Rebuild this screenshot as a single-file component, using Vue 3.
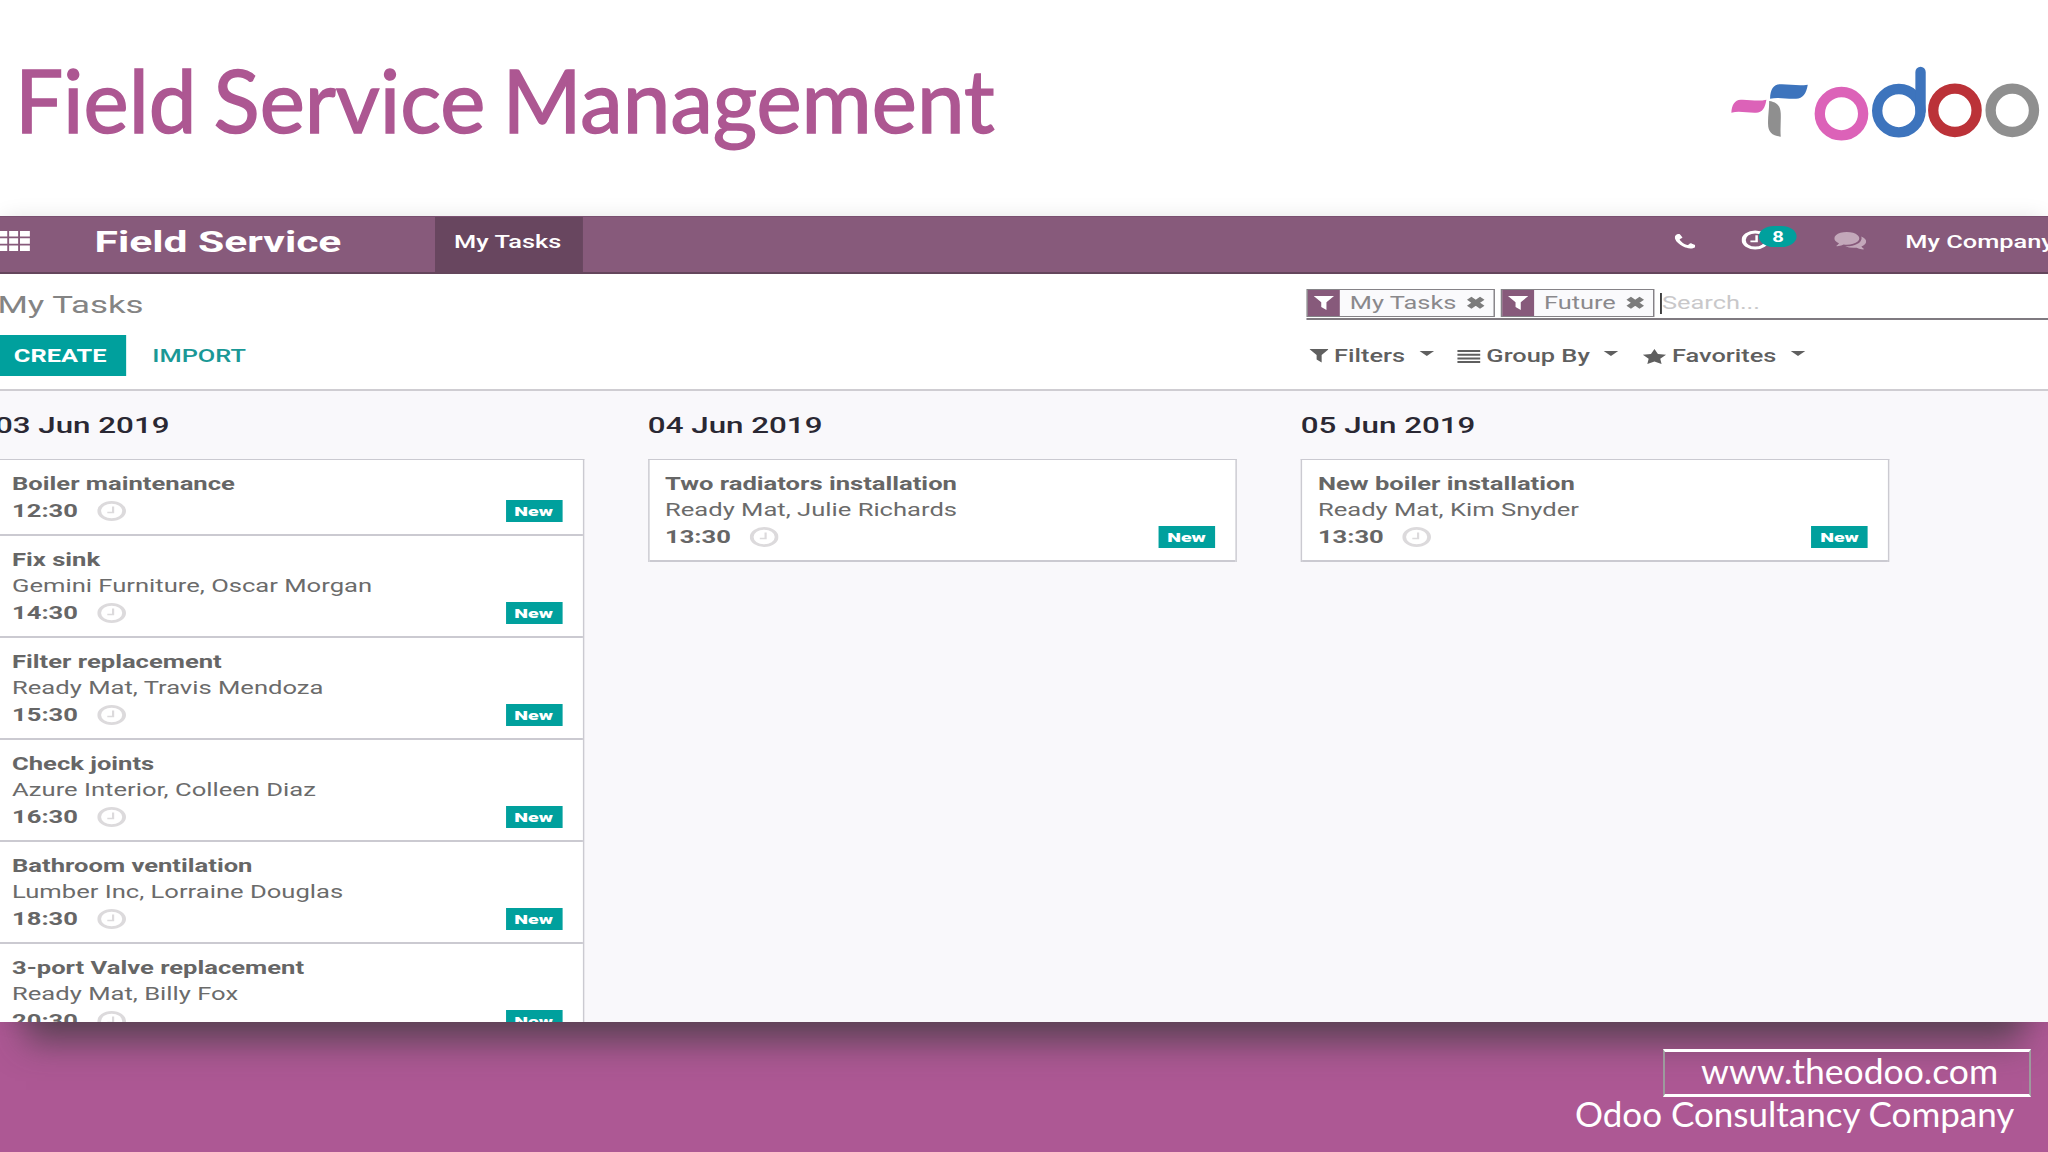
<script setup>
const menus = [
  { label: 'Filters', icon: 'filter' },
  { label: 'Group By', icon: 'bars' },
  { label: 'Favorites', icon: 'star' },
]
const facets = ['My Tasks', 'Future']
const columns = [
  {
    title: '03 Jun 2019',
    tasks: [
      { name: 'Boiler maintenance', time: '12:30' },
      { name: 'Fix sink', partner: 'Gemini Furniture, Oscar Morgan', time: '14:30' },
      { name: 'Filter replacement', partner: 'Ready Mat, Travis Mendoza', time: '15:30' },
      { name: 'Check joints', partner: 'Azure Interior, Colleen Diaz', time: '16:30' },
      { name: 'Bathroom ventilation', partner: 'Lumber Inc, Lorraine Douglas', time: '18:30' },
      { name: '3-port Valve replacement', partner: 'Ready Mat, Billy Fox', time: '20:30' },
    ],
  },
  { title: '04 Jun 2019', tasks: [{ name: 'Two radiators installation', partner: 'Ready Mat, Julie Richards', time: '13:30' }] },
  { title: '05 Jun 2019', tasks: [{ name: 'New boiler installation', partner: 'Ready Mat, Kim Snyder', time: '13:30' }] },
]
</script>

<template>
  <div class="slide">
    <header class="head">
      <h1 class="title">Field Service Management</h1>
      <svg class="logo" viewBox="0 0 1043 360" preserveAspectRatio="none">
        <path fill="#dc62b8" d="M94 218C95 194 104 180 122 179C150 178 172 185 199 179C195 204 187 217 168 218C142 219 118 212 94 218Z" />
        <path fill="#3d74bd" d="M210 176C211 148 220 134 240 133C268 132 294 139 323 134C319 160 308 175 288 176C262 178 236 170 210 176Z" />
        <path fill="#8f8f8f" d="M207 183C230 186 241 197 242 220C243 244 240 266 242 290C216 287 204 276 204 252C203 228 208 206 207 183Z" />
        <g fill="none" stroke-width="31">
          <circle cx="424" cy="221" r="65" stroke="#dc62b8" />
          <circle cx="596" cy="212" r="65" stroke="#3d74bd" />
          <path d="M661 212V96" stroke="#3d74bd" stroke-linecap="round" />
          <circle cx="764" cy="211" r="65" stroke="#bb3238" />
          <circle cx="936" cy="211" r="65" stroke="#8f8f8f" />
        </g>
      </svg>
    </header>

    <div class="shot">
      <div class="app">
        <nav class="nav">
          <svg class="apps" viewBox="0 0 21 20"><path fill="#fff" d="M0 0h5v5.600H0zM6.300 0h6.200v5.600H6.300zM13.800 0h6.800v5.600h-6.800zM0 7.200h5v5.600H0zM6.300 7.200h6.200v5.600H6.300zM13.800 7.200h6.800v5.600h-6.800zM0 14.400h5V20H0zM6.300 14.400h6.200V20H6.300zM13.800 14.400h6.800V20h-6.800z" /></svg>
          <span class="brand">Field Service</span>
          <span class="tab">My Tasks</span>
          <div class="tray">
            <svg class="phone" viewBox="0 0 1408 1408"><path fill="#fff" d="M1408 1112q0 27-10 70.500t-21 68.500q-21 50-122 106-94 51-186 51-27 0-52.500-3.500T959 1392t-47.500-14.500-55.500-20.500-49-18q-98-35-175-83-128-79-264.500-215.500T152 776q-48-77-83-175-3-9-18-49t-20.500-55.500T16 449 3.500 391.500 0 339q0-92 51-186Q107 52 157 31q25-11 68.500-21T296 0q14 0 21 3 18 6 53 76 11 19 30 54t35 63.500 31 53.500q3 4 17.500 25t21.500 35.500 7 28.500q0 20-28.500 50t-62 55-62 53-28.500 46q0 9 5 22.500t8.500 20.500 14 24 11.500 19q76 137 174 235t235 174q2 1 19 11.500t24 14 20.500 8.500 22.500 5q18 0 46-28.500t53-62 55-62 50-28.500q14 0 28.500 7t35.500 21.500 25 17.500q25 15 53.500 31t63.500 35 54 30q70 35 76 53 3 7 3 21z" /></svg>
            <div class="activity">
              <svg viewBox="0 0 20 20"><g fill="none" stroke="#fff"><circle cx="10" cy="10" r="8.400" stroke-width="3" /><path d="M11 5v6.500H6.500" stroke-width="1.800" /></g></svg>
              <span class="count">8</span>
            </div>
            <svg class="chat" viewBox="0 0 1792 1536" preserveAspectRatio="none"><path fill="#c3a8ba" d="M1408 512q0 139-94 257t-256.500 186.500T704 1024q-86 0-176-16-124 88-278 128-36 9-86 16h-3q-11 0-20.500-8t-11.500-21q-1-3-1-6.500t.5-6.500 2-6l2.500-5 3.500-5.500 4-5 4.500-5 4-4.500q5-6 23-25t26-29.500 22.500-29 25-38.500 20.500-44q-124-72-195-177T0 512q0-139 94-257T350.500 68.500 704 0t353.500 68.500T1314 255t94 257zM1792 768q0 120-71 224.500T1526 1169q10 24 20.500 44t25 38.500 22.500 29 26 29.500 23 25q1 1 4 4.500t4.500 5 4 5 3.500 5.500l2.500 5 2 6 .5 6.500-1 6.500q-3 14-13 22t-22 7q-50-7-86-16-154-40-278-128-90 16-176 16-271 0-472-132 58 4 88 4 161 0 309-45t264-129q125-92 192-212t67-254q0-77-23-152 129 71 204 178t75 230z" /></svg>
            <span class="company">My Company</span>
          </div>
        </nav>

        <section class="panel">
          <div class="left">
            <div class="crumb">My Tasks</div>
            <div class="buttons"><button class="create">CREATE</button><button class="import">IMPORT</button></div>
          </div>
          <div class="right">
            <div class="search">
              <div v-for="f in facets" :key="f" class="facet">
                <span class="ficon"><svg viewBox="0 0 14 14"><path fill="#fff" d="M0 0h14L8.800 6.200V14L5.200 11V6.200z" /></svg></span>
                <span class="flabel">{{ f }}</span>
                <svg class="x" viewBox="0 0 12 12"><path d="M2 2l8 8M10 2l-8 8" stroke="#7c7c7c" stroke-width="3.900" /></svg>
              </div>
              <span class="cursor"></span><span class="ph">Search...</span>
            </div>
            <div class="menus">
              <div v-for="m in menus" :key="m.label" class="menu" :class="m.icon">
                <svg v-if="m.icon === 'filter'" class="mi" viewBox="0 0 14 14"><path fill="#5f5f5f" d="M0 0h14L8.800 6.200V14L5.200 11V6.200z" /></svg>
                <svg v-else-if="m.icon === 'bars'" class="mi" viewBox="0 0 16 14"><path fill="#5f5f5f" d="M0 .5h16v2H0zM0 4.200h16v2H0zM0 7.900h16v2H0zM0 11.600h16v2H0z" /></svg>
                <svg v-else class="mi" viewBox="0 0 16 15"><path fill="#5f5f5f" d="M8 0l2.400 5 5.600.8-4 3.900.9 5.300L8 12.400 3.100 15l.9-5.300-4-3.900L5.600 5z" /></svg>
                <span class="ml">{{ m.label }}</span>
                <i class="caret"></i>
              </div>
            </div>
          </div>
        </section>

        <main class="board">
          <section v-for="c in columns" :key="c.title" class="col">
            <h2>{{ c.title }}</h2>
            <div class="cards">
              <article v-for="t in c.tasks" :key="t.name" class="card">
                <div class="name">{{ t.name }}</div>
                <div v-if="t.partner" class="partner">{{ t.partner }}</div>
                <div class="foot">
                  <span class="time">{{ t.time }}</span>
                  <svg class="clock" viewBox="0 0 20 20"><g fill="none" stroke="#dcdadc"><circle cx="10" cy="10" r="8.600" stroke-width="2.600" /><path d="M11 5.500v6H7" stroke-width="1.500" /></g></svg>
                  <span class="badge">New</span>
                </div>
              </article>
            </div>
          </section>
        </main>
      </div>
    </div>

    <footer class="bottom">
      <div class="site"><span>www.theodoo.com</span></div>
      <div class="tagline"><span>Odoo Consultancy Company</span></div>
    </footer>
  </div>
</template>

<style>
body { margin: 0; overflow: hidden; }
</style>

<style scoped>
* { box-sizing: border-box; }
.slide { width: 2048px; height: 1152px; overflow: hidden; background: #fff; display: flex; flex-direction: column; font-family: Roboto, sans-serif; }
.head { height: 216px; flex: none; display: flex; justify-content: space-between; align-items: flex-start; }
.title { margin: 47px 0 0 15px; font: 400 88px/104px Lato, sans-serif; word-spacing: -5px; color: #ad5792; white-space: nowrap; transform: scaleX(.97); transform-origin: 0 0; -webkit-text-stroke: 1.500px #ad5792; }
.logo { width: 348px; height: 120px; margin-top: 40px; flex: none; }

.shot { position: relative; z-index: 1; height: 806px; flex: none; box-shadow: 0 46px 32px -26px rgba(60, 58, 60, .7), 0 0 22px -4px rgba(0, 0, 0, .14); }
/* the app is shown wider than its natural proportions */
.app { width: 1413px; height: 806px; overflow: hidden; transform: scaleX(1.45); transform-origin: 0 0; background: #f9f8fb; color: #5f5f5f; font-size: 17.500px; }
.nav { height: 58px; background: #875a7b; border-top: 1px solid #7a5070; border-bottom: 2px solid #64465c; display: grid; grid-template-columns: 65.200px 234.800px 102px 1fr; color: #fff; white-space: nowrap; }
.apps { width: 21px; height: 20px; margin: 14px 0 0 0; }
.brand { font-weight: 700; font-size: 29.400px; line-height: 50px; }
.tab { background: #68465f; font-weight: 500; line-height: 51px; padding-left: 13.200px; }
.tray { display: grid; grid-template-columns: 46.200px 64px 49px 1fr; padding-left: 752.800px; line-height: 51px; }
.phone { width: 14.500px; height: 14.500px; margin-top: 17px; }
.activity { position: relative; }
.activity svg { display: block; width: 19px; height: 20px; margin-top: 13px; }
.count { position: absolute; left: 12.500px; top: 9px; width: 25.500px; height: 21px; border-radius: 11px; background: #00a09d; font-size: 14px; font-weight: 700; line-height: 22px; text-align: center; }
.chat { width: 22px; height: 19px; margin-top: 15px; }
.company { font-weight: 500; }

.panel { height: 117px; background: #fff; border-bottom: 2px solid #cfcdd2; display: flex; white-space: nowrap; }
.left { width: 901.400px; flex: none; }
.crumb { font-size: 24px; line-height: 30px; margin: 16px 0 0 -1.800px; color: #848484; }
.buttons { display: flex; margin-top: 15px; gap: 18px; }
button { border: 0; padding: 0; font: 500 17.500px/43px Roboto, sans-serif; height: 41px; }
.create { width: 87px; background: #00a09d; color: #fff; text-align: left; padding-left: 9.500px; font-weight: 700; }
.import { background: none; color: #1a9896; }
.right { flex: 1; }
.search { height: 46px; border-bottom: 2px solid #7f7a80; padding-top: 15px; display: flex; }
.facet { height: 28px; border: 1.500px solid #858287; display: flex; align-items: center; margin-right: 4.600px; background: #fafafc; color: #8a898c; }
.facet:nth-child(1) { width: 129.300px; }
.facet:nth-child(2) { width: 106px; margin-right: 3.500px; }
.ficon { width: 21.500px; height: 100%; background: #875a7b; display: flex; align-items: center; justify-content: center; }
.ficon svg { width: 14px; height: 14px; }
.flabel { padding-left: 7px; flex: 1; line-height: 26px; }
.x { width: 13.500px; height: 13.500px; margin-right: 5.500px; }
.cursor { width: 1.400px; height: 21px; margin-top: 4px; background: #000; }
.ph { color: #c9c8ca; line-height: 28px; }
.menus { display: grid; grid-template-columns: 102.500px 128px 150px; margin: 23px 0 0 1.200px; line-height: 26px; font-weight: 500; }
.menu { display: flex; align-items: center; }
.mi { width: 16px; height: 15px; margin-right: 4px; }
.filter .mi { width: 13.500px; height: 13.500px; }
.caret { margin: -5px 0 0 9.500px; border: 5px solid transparent; border-top-color: #5f5f5f; border-bottom: 0; }

.board { display: flex; gap: 44.300px; margin-left: -3.500px; }
.col { width: 406px; flex: none; }
h2 { margin: 21px 0 20px 0; font: 500 21.600px/27px Roboto, sans-serif; color: #2a2833; }
.cards { border: solid #cbcad1; border-width: 1px 1.400px 0; background: #fff; }
.card { border-bottom: 2px solid #cbcad1; padding: 11px 11px 11px 10.800px; line-height: 26px; white-space: nowrap; font-size: 17.650px; }
.name { font-weight: 700; line-height: 26px; color: #666; }
.partner { color: #6b6b6b; }
.foot { display: flex; align-items: center; height: 26px; padding-top: 1px; }
.time { width: 58.500px; font-weight: 700; color: #666; }
.clock { width: 20px; height: 20px; }
.badge { width: 39px; height: 22px; margin: 0 3px 0 auto; background: #00a09d; color: #fff; font-size: 13.500px; font-weight: 900; line-height: 23px; text-align: center; }

.bottom { height: 130px; background: #ad5894; color: #fff; font-family: Lato, sans-serif; white-space: nowrap; display: flex; flex-direction: column; align-items: flex-end; padding-right: 17px; }
.site { position: relative; z-index: 2; width: 368px; height: 48px; margin-top: 27px; border: solid #fff; border-width: 3px 2px; border-left-color: #9d9a9d; border-right-color: #9d9a9d; padding-left: 36px; font-size: 34px; line-height: 38px; }
.site span, .tagline span { display: inline-block; transform-origin: 0 0; }
.site span { transform: scaleX(1.044); }
.tagline { width: 456px; font-size: 34px; line-height: 34px; }
.tagline span { transform: scaleX(1.029); }
</style>
